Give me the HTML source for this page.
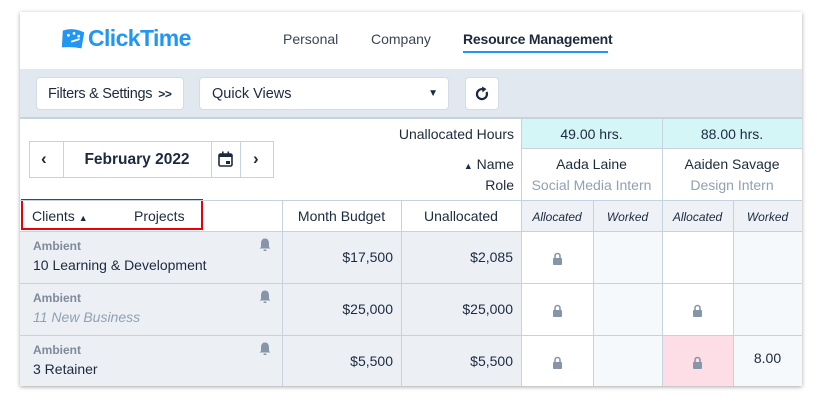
<!DOCTYPE html>
<html><head><meta charset="utf-8"><style>
*{box-sizing:border-box;margin:0;padding:0}
body{width:820px;height:400px;background:#fff;font-family:"Liberation Sans",sans-serif;color:#1c2a3e;position:relative;overflow:hidden}
.a{position:absolute}
.frame{left:20px;top:12px;width:782px;height:374px;background:#fff;box-shadow:0 1px 4px rgba(0,0,0,.35);overflow:hidden}
.btn{background:#fff;border-radius:4px;border:1px solid #d4dde6;font-size:14.5px;display:flex;align-items:center;white-space:nowrap}
.vl{width:1px;background:#c6d2dd}
.hl{height:1px;background:#c6d2dd}
.t{font-size:14px;white-space:nowrap}
.r{text-align:right}
.c{text-align:center}
</style></head><body>
<div class="a frame">
 <svg class="a" style="left:40px;top:15px" width="28" height="24" viewBox="0 0 30 24"><path d="M3 3 Q14 -1 26 5 L23 22 Q12 20 2 21 Z" fill="#2196f3"/><circle cx="9" cy="8" r="1.5" fill="#fff"/><circle cx="15" cy="6" r="1.5" fill="#fff"/><circle cx="20" cy="9" r="1.5" fill="#fff"/><path d="M12 15 L21 12" stroke="#fff" stroke-width="2"/></svg>
 <div class="a" style="left:68px;top:13px;font-size:23px;font-weight:bold;color:#2196f3;letter-spacing:-0.6px">ClickTime</div>
 <div class="a t" style="left:263px;top:19px;font-size:14px;color:#3a4656">Personal</div>
 <div class="a t" style="left:351px;top:19px;font-size:14px;color:#3a4656">Company</div>
 <div class="a t" style="left:443px;top:19px;font-size:14px;font-weight:bold;letter-spacing:-0.2px">Resource Management</div>
 <div class="a" style="left:443px;top:39px;width:145px;height:2px;background:#2196f3"></div>
 <div class="a" style="left:0;top:57px;width:782px;height:49px;background:#e1e8ef;border-bottom:1px solid #c6d2dd"></div>
 <div class="a btn" style="left:16px;top:65px;width:148px;height:33px;padding-left:11px;letter-spacing:-0.3px">Filters &amp; Settings <span style="margin-left:6px;font-weight:bold;font-size:12px">&gt;&gt;</span></div>
 <div class="a btn" style="left:179px;top:65px;width:250px;height:33px;padding-left:12px">Quick Views<span style="position:absolute;right:10px;font-size:10px">▼</span></div>
 <div class="a btn" style="left:445px;top:65px;width:34px;height:33px;justify-content:center"><svg width="16" height="16" viewBox="0 0 16 16"><path d="M12.5 6 A5 5 0 1 1 9 3.2" fill="none" stroke="#1c2a3e" stroke-width="2.2"/><path d="M8 0.5 L12.5 3 L8.5 6.5 Z" fill="#1c2a3e"/></svg></div>
 <div class="a" style="left:501px;top:107px;width:281px;height:29px;background:#d5f6f6"></div>
 <div class="a t r" style="left:300px;top:114px;width:194px">Unallocated Hours</div>
 <div class="a t c" style="left:501px;top:114px;width:141px">49.00 hrs.</div>
 <div class="a t c" style="left:642px;top:114px;width:140px">88.00 hrs.</div>
 <div class="a t r" style="left:300px;top:144px;width:194px"><span style="font-size:9px">▲</span> Name</div>
 <div class="a t r" style="left:300px;top:165px;width:194px">Role</div>
 <div class="a t c" style="left:501px;top:144px;width:141px">Aada Laine</div>
 <div class="a t c" style="left:501px;top:165px;width:141px;color:#8fa1b3">Social Media Intern</div>
 <div class="a t c" style="left:642px;top:144px;width:140px">Aaiden Savage</div>
 <div class="a t c" style="left:642px;top:165px;width:140px;color:#8fa1b3">Design Intern</div>
 <div class="a" style="left:9px;top:129px;width:245px;height:37px;border:1px solid #c6d2dd;background:#fff"></div>
 <div class="a vl" style="left:43px;top:129px;height:37px"></div>
 <div class="a vl" style="left:191px;top:129px;height:37px"></div>
 <div class="a vl" style="left:220px;top:129px;height:37px"></div>
 <div class="a t" style="left:21px;top:137px;font-weight:bold;font-size:17px">&lsaquo;</div>
 <div class="a t c" style="left:43px;top:139px;width:148px;font-weight:bold;font-size:15.5px">February 2022</div>
 <svg class="a" style="left:198px;top:139px" width="15" height="16" viewBox="0 0 15 16"><rect x="1" y="3" width="13" height="12" rx="1.5" fill="none" stroke="#1c2a3e" stroke-width="1.6"/><rect x="1" y="3" width="13" height="3" fill="#1c2a3e"/><rect x="4" y="0.5" width="1.6" height="4" fill="#1c2a3e"/><rect x="9.5" y="0.5" width="1.6" height="4" fill="#1c2a3e"/><rect x="8" y="10" width="4" height="3" fill="#1c2a3e"/></svg>
 <div class="a t" style="left:233px;top:137px;font-weight:bold;font-size:17px">&rsaquo;</div>
 <div class="a" style="left:501px;top:188px;width:281px;height:31px;background:#eef2f6"></div>
 <div class="a t" style="left:12px;top:196px">Clients <span style="font-size:9px">▲</span></div>
 <div class="a t" style="left:114px;top:196px">Projects</div>
 <div class="a" style="left:1px;top:187px;width:182px;height:31px;border:2.5px solid #e8000b"></div>
 <div class="a t c" style="left:262px;top:196px;width:119px">Month Budget</div>
 <div class="a t c" style="left:381px;top:196px;width:120px">Unallocated</div>
 <div class="a t c" style="left:501px;top:198px;width:72px;font-size:12px;font-style:italic">Allocated</div>
 <div class="a t c" style="left:573px;top:198px;width:69px;font-size:12px;font-style:italic">Worked</div>
 <div class="a t c" style="left:642px;top:198px;width:71px;font-size:12px;font-style:italic">Allocated</div>
 <div class="a t c" style="left:713px;top:198px;width:69px;font-size:12px;font-style:italic">Worked</div>
 <div class="a" style="left:0;top:219px;width:501px;height:155px;background:#ecf0f5"></div>
 <div class="a" style="left:573px;top:219px;width:69px;height:155px;background:#f5f9fb"></div>
 <div class="a" style="left:713px;top:219px;width:69px;height:155px;background:#f5f9fb"></div>
 <div class="a" style="left:642px;top:323px;width:71px;height:51px;background:#fddde6"></div>
 <div class="a hl" style="left:0;top:106px;width:782px"></div>
 <div class="a hl" style="left:501px;top:136px;width:281px"></div>
 <div class="a hl" style="left:0;top:188px;width:782px"></div>
 <div class="a hl" style="left:0;top:219px;width:782px"></div>
 <div class="a hl" style="left:0;top:271px;width:782px"></div>
 <div class="a hl" style="left:0;top:323px;width:782px"></div>
 <div class="a vl" style="left:501px;top:106px;height:268px"></div>
 <div class="a vl" style="left:642px;top:106px;height:268px"></div>
 <div class="a vl" style="left:262px;top:188px;height:186px"></div>
 <div class="a vl" style="left:381px;top:188px;height:186px"></div>
 <div class="a vl" style="left:573px;top:188px;height:186px"></div>
 <div class="a vl" style="left:713px;top:188px;height:186px"></div>
 <div class="a t" style="left:13px;top:227px;font-size:12px;font-weight:bold;color:#7d8b9a">Ambient</div>
 <div class="a t" style="left:13px;top:245px">10 Learning &amp; Development</div>
 <div class="a t" style="left:13px;top:279px;font-size:12px;font-weight:bold;color:#7d8b9a">Ambient</div>
 <div class="a t" style="left:13px;top:297px;font-style:italic;color:#8fa1b3">11 New Business</div>
 <div class="a t" style="left:13px;top:331px;font-size:12px;font-weight:bold;color:#7d8b9a">Ambient</div>
 <div class="a t" style="left:13px;top:349px">3 Retainer</div>
 <div class="a t r" style="left:262px;top:237px;width:111px">$17,500</div>
 <div class="a t r" style="left:381px;top:237px;width:112px">$2,085</div>
 <div class="a t r" style="left:262px;top:289px;width:111px">$25,000</div>
 <div class="a t r" style="left:381px;top:289px;width:112px">$25,000</div>
 <div class="a t r" style="left:262px;top:341px;width:111px">$5,500</div>
 <div class="a t r" style="left:381px;top:341px;width:112px">$5,500</div>
 <div class="a t c" style="left:713px;top:338px;width:69px">8.00</div>
 <svg class="a" style="left:239px;top:226px" width="12" height="14" viewBox="0 0 12 14"><path d="M6 0.5 C3 0.5 2 3 2 5.5 L2 9 L0.5 10.5 L11.5 10.5 L10 9 L10 5.5 C10 3 9 0.5 6 0.5Z" fill="#8696a8"/><rect x="4.5" y="11.5" width="3" height="1.5" rx="0.7" fill="#8696a8"/></svg>
 <svg class="a" style="left:239px;top:278px" width="12" height="14" viewBox="0 0 12 14"><path d="M6 0.5 C3 0.5 2 3 2 5.5 L2 9 L0.5 10.5 L11.5 10.5 L10 9 L10 5.5 C10 3 9 0.5 6 0.5Z" fill="#8696a8"/><rect x="4.5" y="11.5" width="3" height="1.5" rx="0.7" fill="#8696a8"/></svg>
 <svg class="a" style="left:239px;top:330px" width="12" height="14" viewBox="0 0 12 14"><path d="M6 0.5 C3 0.5 2 3 2 5.5 L2 9 L0.5 10.5 L11.5 10.5 L10 9 L10 5.5 C10 3 9 0.5 6 0.5Z" fill="#8696a8"/><rect x="4.5" y="11.5" width="3" height="1.5" rx="0.7" fill="#8696a8"/></svg>
 <svg class="a" style="left:532px;top:240px" width="11" height="13" viewBox="0 0 11 13"><path d="M3 6 V4 A2.5 2.5 0 0 1 8 4 V6" fill="none" stroke="#8696a8" stroke-width="1.6"/><rect x="1" y="6" width="9" height="7" rx="1" fill="#8696a8"/></svg>
 <svg class="a" style="left:532px;top:292px" width="11" height="13" viewBox="0 0 11 13"><path d="M3 6 V4 A2.5 2.5 0 0 1 8 4 V6" fill="none" stroke="#8696a8" stroke-width="1.6"/><rect x="1" y="6" width="9" height="7" rx="1" fill="#8696a8"/></svg>
 <svg class="a" style="left:532px;top:344px" width="11" height="13" viewBox="0 0 11 13"><path d="M3 6 V4 A2.5 2.5 0 0 1 8 4 V6" fill="none" stroke="#8696a8" stroke-width="1.6"/><rect x="1" y="6" width="9" height="7" rx="1" fill="#8696a8"/></svg>
 <svg class="a" style="left:672px;top:292px" width="11" height="13" viewBox="0 0 11 13"><path d="M3 6 V4 A2.5 2.5 0 0 1 8 4 V6" fill="none" stroke="#8696a8" stroke-width="1.6"/><rect x="1" y="6" width="9" height="7" rx="1" fill="#8696a8"/></svg>
 <svg class="a" style="left:672px;top:344px" width="11" height="13" viewBox="0 0 11 13"><path d="M3 6 V4 A2.5 2.5 0 0 1 8 4 V6" fill="none" stroke="#8696a8" stroke-width="1.6"/><rect x="1" y="6" width="9" height="7" rx="1" fill="#8696a8"/></svg>
</div>
</body></html>
